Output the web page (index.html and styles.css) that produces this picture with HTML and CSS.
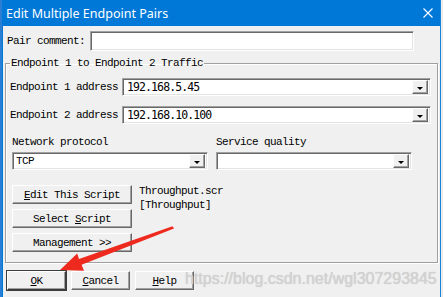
FILE: index.html
```html
<!DOCTYPE html>
<html lang="en">
<head>
    <title>Edit Multiple Endpoint Pairs</title>
    <link rel="stylesheet" href="styles.css">
</head>
<body>

    <div class="window">
        <div class="titlebar">
            <span class="title">Edit Multiple Endpoint Pairs</span>
            <svg class="close" width="10" height="10" viewBox="0 0 10 10">
                <path d="M0.5 0.5 L9.5 9.5 M9.5 0.5 L0.5 9.5" stroke="#fff" stroke-width="1.1" fill="none"/>
            </svg>
        </div>

        <div class="content">
            <div class="comment-row">
                <label class="comment-label" for="comment">Pair comment:</label>
                <input class="sunken comment-input" type="text" id="comment">
            </div>

            <fieldset class="group">
                <legend>Endpoint 1 to Endpoint 2 Traffic</legend>

                <div class="addr-row first">
                    <span class="addr-label">Endpoint 1 address</span>
                    <div class="sunken combo wide">
                        <span class="combo-value ip">192.168.5.45</span>
                        <span class="drop"><i></i></span>
                    </div>
                </div>
                <div class="addr-row second">
                    <span class="addr-label">Endpoint 2 address</span>
                    <div class="sunken combo wide">
                        <span class="combo-value ip">192.168.10.100</span>
                        <span class="drop"><i></i></span>
                    </div>
                </div>

                <div class="pair-row labels">
                    <span class="col">Network protocol</span>
                    <span class="col">Service quality</span>
                </div>
                <div class="pair-row combos">
                    <div class="sunken combo half">
                        <span class="combo-value">TCP</span>
                        <span class="drop"><i></i></span>
                    </div>
                    <div class="sunken combo half">
                        <span class="combo-value"></span>
                        <span class="drop"><i></i></span>
                    </div>
                </div>

                <div class="script-area">
                    <div class="script-buttons">
                        <button class="btn"><u>E</u>dit This Script</button>
                        <button class="btn">Select <u>S</u>cript</button>
                        <button class="btn">Management &gt;&gt;</button>
                    </div>
                    <div class="script-info">
                        <div>Throughput.scr</div>
                        <div>[Throughput]</div>
                    </div>
                </div>
            </fieldset>

            <div class="footer">
                <button class="btn small default"><u>O</u>K</button>
                <button class="btn small"><u>C</u>ancel</button>
                <button class="btn small"><u>H</u>elp</button>
            </div>
        </div>
    </div>

    <div class="watermark">https://blog.csdn.net/wgl307293845</div>

    <svg class="arrow" width="443" height="297" viewBox="0 0 443 297">
        <polygon fill="#ee2a1e" points="172.5,226.2 174,228.6 81.6,264.8 84,270.8 60,270 77.2,253.6 79,259"/>
    </svg>

</body>
</html>
```

FILE: styles.css
```css
* {
    box-sizing: border-box;
}

body {
    margin: 0;
    width: 443px;
    height: 297px;
    overflow: hidden;
    position: relative;
    background: linear-gradient(to right, #2a7fd4 2px, #ececec 2px);
    font-family: "Liberation Mono", monospace;
    font-size: 11px;
    letter-spacing: -0.6px;
    color: #000;
}

.window {
    margin-left: 2px;
    width: 439px;
    height: 297px;
    border-left: 1px solid #0078d7;
    border-right: 1px solid #1a84dc;
    background: #f0f0f0;
    display: flex;
    flex-direction: column;
}

.titlebar {
    height: 26px;
    flex: none;
    background: #0078d7;
    display: flex;
    align-items: center;
    justify-content: space-between;
    padding: 0 7px 0 3px;
}

.title {
    font-family: "Noto Sans", sans-serif;
    font-size: 12.5px;
    letter-spacing: 0;
    color: #fff;
}

.close {
    display: block;
}

/* sunken edit / combo frame */
.sunken {
    background: #fff;
    border: 1px solid;
    border-color: #a0a0a0 #fff #fff #a0a0a0;
    box-shadow: inset 1px 1px 0 #696969, inset -1px -1px 0 #e3e3e3;
}

.comment-row {
    display: flex;
    align-items: center;
    margin-top: 5px;
    padding-left: 4px;
}

.comment-label {
    width: 83px;
}

.comment-input {
    width: 324px;
    height: 20px;
    outline: none;
}

.group {
    margin: 6px 0 0 2px;
    width: 433px;
    padding: 0 0 10px 0;
    border: 1px solid #a0a0a0;
    box-shadow: inset 1px 1px 0 #fff, 1px 1px 0 #fff;
}

.group legend {
    margin-left: 4px;
    padding: 0 1px;
    line-height: 12px;
}

.addr-row {
    display: flex;
    align-items: center;
    padding-left: 4px;
}

.addr-row.first {
    margin-top: 9px;
}

.addr-row.second {
    margin-top: 10px;
}

.addr-label {
    width: 112px;
}

.combo {
    height: 18px;
    display: flex;
    align-items: center;
    justify-content: space-between;
    padding: 2px;
}

.combo.wide {
    width: 309px;
}

.combo.half {
    width: 196px;
}

.combo-value {
    padding-left: 1px;
    line-height: 14px;
}

.ip {
    font-family: "DejaVu Sans Mono", monospace;
    font-size: 11.5px;
    letter-spacing: -0.9px;
    padding-left: 2px;
}

.drop {
    width: 16px;
    height: 14px;
    background: #f0f0f0;
    border: 1px solid;
    border-color: #fff #696969 #696969 #fff;
    box-shadow: inset -1px -1px 0 #a0a0a0;
    display: flex;
    align-items: center;
    justify-content: center;
}

.drop i {
    display: block;
    width: 0;
    height: 0;
    border-left: 3px solid transparent;
    border-right: 3px solid transparent;
    border-top: 3px solid #000;
    margin-top: 2px;
}

.pair-row {
    display: flex;
    gap: 9px;
    padding-left: 6px;
}

.pair-row.labels {
    margin-top: 12px;
    line-height: 12px;
}

.pair-row .col {
    width: 195px;
}

.pair-row.combos {
    margin-top: 4px;
    gap: 8px;
}

.script-area {
    display: flex;
    gap: 7px;
    padding-left: 6px;
    margin-top: 15px;
}

.script-buttons {
    display: flex;
    flex-direction: column;
    gap: 5px;
}

.script-info {
    line-height: 14px;
    margin-top: -1px;
}

.btn {
    font-family: "Liberation Mono", monospace;
    font-size: 11px;
    letter-spacing: -0.6px;
    color: #000;
    width: 120px;
    height: 19px;
    padding: 0;
    background: #f0f0f0;
    border: 1px solid;
    border-color: #fff #696969 #696969 #fff;
    box-shadow: inset -1px -1px 0 #a0a0a0;
}

.footer {
    display: flex;
    gap: 5px;
    padding-left: 4px;
    margin-top: 8px;
}

.btn.small {
    width: 59px;
}

.btn.default {
    outline: 1px solid #3c3c3c;
    outline-offset: 0;
    border-color: #fff #3c3c3c #3c3c3c #fff;
}

.watermark {
    position: absolute;
    left: 185px;
    top: 270px;
    font-family: "Liberation Sans", sans-serif;
    font-size: 16px;
    letter-spacing: 0;
    line-height: 18px;
    color: #d2d2d2;
    text-shadow: 0 0 1px #c4c4c4;
}

.arrow {
    position: absolute;
    left: 0;
    top: 0;
    pointer-events: none;
}
```
